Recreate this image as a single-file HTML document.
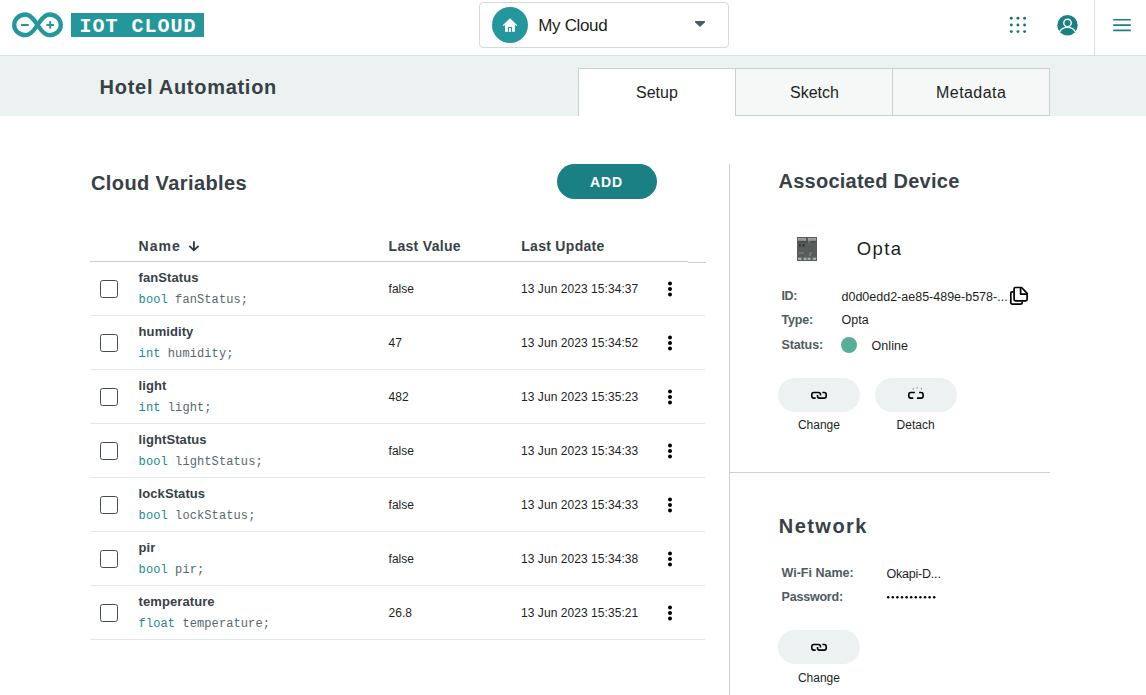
<!DOCTYPE html>
<html><head><meta charset="utf-8"><title>IoT Cloud</title><style>
*{box-sizing:border-box}
html,body{margin:0;padding:0}
body{width:1146px;height:695px;overflow:hidden;background:#fff;position:relative;font-family:'Liberation Sans',sans-serif}
.t{position:absolute;white-space:nowrap;line-height:1}
.a{position:absolute}
</style></head><body>
<div class="a" style="left:0;top:55px;width:1146px;height:1px;background:#dcdfdf"></div>
<svg class="a" style="left:0;top:0" width="80" height="50" viewBox="0 0 80 50">
<g fill="none" stroke="#24979c" stroke-width="4.3">
<path d="M37.5,25 C35,21.5 31.5,14.5 25.6,14.5 C19,14.5 14.2,19.3 14.2,24.9 C14.2,30.5 19,35.2 25.6,35.2 C31.5,35.2 35,28.5 37.5,25 Z"/>
<path d="M37.5,25 C40,21.5 43.5,14.5 49.4,14.5 C56,14.5 60.8,19.3 60.8,24.9 C60.8,30.5 56,35.2 49.4,35.2 C43.5,35.2 40,28.5 37.5,25 Z"/>
</g>
<rect x="21" y="24" width="7.8" height="2" fill="#24979c"/>
<rect x="46.4" y="24" width="7.6" height="2" fill="#24979c"/>
<rect x="49.2" y="21.2" width="2" height="7.4" fill="#24979c"/>
</svg>
<div class="a" style="left:71px;top:13px;width:133px;height:24px;background:#24979c"></div>
<div class="t " style="left:79.5px;top:16.97px;font-size:20px;font-weight:bold;color:#fff;font-family:'Liberation Mono', monospace;letter-spacing:1px">IOT CLOUD</div>

<div class="a" style="left:479px;top:2px;width:250px;height:46px;border:1px solid #d3dadb;border-radius:4px"></div>
<div class="a" style="left:492px;top:7px;width:36px;height:36px;border-radius:50%;background:#24979c"></div>
<svg class="a" style="left:500px;top:15px" width="20" height="20" viewBox="0 0 20 20">
<path d="M10,3.2 L17.3,10.3 L16.5,11.1 L15,9.8 L15,16.8 L5,16.8 L5,9.8 L3.5,11.1 L2.7,10.3 Z" fill="#fff"/>
<rect x="8" y="12" width="4" height="4.8" fill="#24979c"/><rect x="9" y="13" width="2" height="3.8" fill="#fff"/>
</svg>
<div class="t " style="left:538.3px;top:16.55px;font-size:17px;font-weight:normal;color:#1b1f22;font-family:'Liberation Sans', sans-serif;letter-spacing:-0.35px">My Cloud</div>

<svg class="a" style="left:694px;top:20px" width="12" height="8" viewBox="0 0 12 8"><path d="M1,1 L11,1 L11,2.3 L6,7.1 L1,2.3 Z" fill="#4e5b61"/></svg>
<svg class="a" style="left:0;top:0" width="1146" height="56"><circle cx="1011.30" cy="18.30" r="1.45" fill="#0f767a"/><circle cx="1011.30" cy="24.95" r="1.45" fill="#0f767a"/><circle cx="1011.30" cy="31.60" r="1.45" fill="#0f767a"/><circle cx="1017.95" cy="18.30" r="1.45" fill="#0f767a"/><circle cx="1017.95" cy="24.95" r="1.45" fill="#0f767a"/><circle cx="1017.95" cy="31.60" r="1.45" fill="#0f767a"/><circle cx="1024.60" cy="18.30" r="1.45" fill="#0f767a"/><circle cx="1024.60" cy="24.95" r="1.45" fill="#0f767a"/><circle cx="1024.60" cy="31.60" r="1.45" fill="#0f767a"/><circle cx="1067.5" cy="25.3" r="10.2" fill="#1b8083"/><circle cx="1067.5" cy="22.9" r="3.7" fill="none" stroke="#fff" stroke-width="1.4"/><path d="M1059.6,32 C1061,28.8 1064,27.3 1067.5,27.3 C1071,27.3 1074,28.8 1075.4,32" fill="none" stroke="#fff" stroke-width="1.3"/><rect x="1094" y="0" width="1" height="55" fill="#dae1e2"/><rect x="1113" y="18.9" width="18" height="1.7" rx="0.8" fill="#1b8083"/><rect x="1113" y="24.2" width="18" height="1.7" rx="0.8" fill="#1b8083"/><rect x="1113" y="29.6" width="18" height="1.7" rx="0.8" fill="#1b8083"/></svg>
<div class="a" style="left:0;top:56px;width:1146px;height:60px;background:#ecf1f1"></div>
<div class="t " style="left:99.6px;top:77.00px;font-size:20px;font-weight:bold;color:#374146;font-family:'Liberation Sans', sans-serif;letter-spacing:0.72px">Hotel Automation</div>

<div class="a" style="left:578px;top:68px;width:158px;height:48px;background:#fff;border:1px solid #c9d2d3;border-bottom:none"></div>
<div class="a" style="left:735px;top:68px;width:158px;height:48px;background:#f6f8f8;border:1px solid #c9d2d3"></div>
<div class="a" style="left:892px;top:68px;width:158px;height:48px;background:#f6f8f8;border:1px solid #c9d2d3"></div>
<div class="a" style="left:736px;top:115px;width:314px;height:1px;background:#c9d2d3"></div>
<div class="t " style="left:636px;top:84.70px;font-size:16px;font-weight:normal;color:#1b1f22;font-family:'Liberation Sans', sans-serif;">Setup</div>

<div class="t " style="left:790px;top:84.70px;font-size:16px;font-weight:normal;color:#1b1f22;font-family:'Liberation Sans', sans-serif;">Sketch</div>

<div class="t " style="left:936px;top:84.70px;font-size:16px;font-weight:normal;color:#1b1f22;font-family:'Liberation Sans', sans-serif;letter-spacing:0.45px">Metadata</div>

<div class="t " style="left:91px;top:172.50px;font-size:20px;font-weight:bold;color:#374146;font-family:'Liberation Sans', sans-serif;letter-spacing:0.4px">Cloud Variables</div>

<div class="a" style="left:557px;top:164px;width:100px;height:35px;border-radius:18px;background:#1b8083"></div>
<div class="t " style="left:590px;top:175.10px;font-size:14px;font-weight:bold;color:#fff;font-family:'Liberation Sans', sans-serif;letter-spacing:0.85px">ADD</div>

<div class="t " style="left:138.6px;top:239.00px;font-size:14px;font-weight:bold;color:#374146;font-family:'Liberation Sans', sans-serif;letter-spacing:1px">Name</div>

<svg class="a" style="left:186px;top:240px" width="16" height="14" viewBox="0 0 16 14"><path d="M7.9,1.2 V10.2 M3.3,5.8 L7.9,10.3 L12.5,5.8" fill="none" stroke="#2c363b" stroke-width="1.8"/></svg>
<div class="t " style="left:388.6px;top:239.40px;font-size:14px;font-weight:bold;color:#374146;font-family:'Liberation Sans', sans-serif;letter-spacing:0.3px">Last Value</div>

<div class="t " style="left:521.2px;top:239.40px;font-size:14px;font-weight:bold;color:#374146;font-family:'Liberation Sans', sans-serif;letter-spacing:0.3px">Last Update</div>

<div class="a" style="left:90px;top:261px;width:598px;height:1px;background:#c5cfd0"></div>
<div class="a" style="left:688px;top:262px;width:18px;height:1px;background:#c5cfd0"></div>
<div class="a" style="left:100px;top:280px;width:18px;height:18px;border:1.6px solid #434e53;border-radius:2.6px"></div>
<div class="t " style="left:138.6px;top:270.75px;font-size:13px;font-weight:bold;color:#374146;font-family:'Liberation Sans', sans-serif;letter-spacing:0.08px">fanStatus</div>

<div class="t " style="left:138.6px;top:293.50px;font-size:12px;font-weight:normal;color:#5a676c;font-family:'Liberation Mono', monospace;letter-spacing:0.1px"><span style="color:#23898d">bool</span> fanStatus;</div>

<div class="t " style="left:388.6px;top:282.80px;font-size:12px;font-weight:normal;color:#1b1f22;font-family:'Liberation Sans', sans-serif;">false</div>

<div class="t " style="left:521px;top:282.60px;font-size:12px;font-weight:normal;color:#1b1f22;font-family:'Liberation Sans', sans-serif;letter-spacing:0.06px">13 Jun 2023 15:34:37</div>

<svg class="a" style="left:666px;top:280px" width="8" height="18" viewBox="0 0 8 18"><circle cx="4" cy="3.5" r="2" fill="#000"/><circle cx="4" cy="9" r="2" fill="#000"/><circle cx="4" cy="14.6" r="2" fill="#000"/></svg>
<div class="a" style="left:90px;top:315px;width:615px;height:1px;background:#e3e8e9"></div>
<div class="a" style="left:100px;top:334px;width:18px;height:18px;border:1.6px solid #434e53;border-radius:2.6px"></div>
<div class="t " style="left:138.6px;top:324.75px;font-size:13px;font-weight:bold;color:#374146;font-family:'Liberation Sans', sans-serif;letter-spacing:0.08px">humidity</div>

<div class="t " style="left:138.6px;top:347.50px;font-size:12px;font-weight:normal;color:#5a676c;font-family:'Liberation Mono', monospace;letter-spacing:0.1px"><span style="color:#23898d">int</span> humidity;</div>

<div class="t " style="left:388.6px;top:336.80px;font-size:12px;font-weight:normal;color:#1b1f22;font-family:'Liberation Sans', sans-serif;">47</div>

<div class="t " style="left:521px;top:336.60px;font-size:12px;font-weight:normal;color:#1b1f22;font-family:'Liberation Sans', sans-serif;letter-spacing:0.06px">13 Jun 2023 15:34:52</div>

<svg class="a" style="left:666px;top:334px" width="8" height="18" viewBox="0 0 8 18"><circle cx="4" cy="3.5" r="2" fill="#000"/><circle cx="4" cy="9" r="2" fill="#000"/><circle cx="4" cy="14.6" r="2" fill="#000"/></svg>
<div class="a" style="left:90px;top:369px;width:615px;height:1px;background:#e3e8e9"></div>
<div class="a" style="left:100px;top:388px;width:18px;height:18px;border:1.6px solid #434e53;border-radius:2.6px"></div>
<div class="t " style="left:138.6px;top:378.75px;font-size:13px;font-weight:bold;color:#374146;font-family:'Liberation Sans', sans-serif;letter-spacing:0.08px">light</div>

<div class="t " style="left:138.6px;top:401.50px;font-size:12px;font-weight:normal;color:#5a676c;font-family:'Liberation Mono', monospace;letter-spacing:0.1px"><span style="color:#23898d">int</span> light;</div>

<div class="t " style="left:388.6px;top:390.80px;font-size:12px;font-weight:normal;color:#1b1f22;font-family:'Liberation Sans', sans-serif;">482</div>

<div class="t " style="left:521px;top:390.60px;font-size:12px;font-weight:normal;color:#1b1f22;font-family:'Liberation Sans', sans-serif;letter-spacing:0.06px">13 Jun 2023 15:35:23</div>

<svg class="a" style="left:666px;top:388px" width="8" height="18" viewBox="0 0 8 18"><circle cx="4" cy="3.5" r="2" fill="#000"/><circle cx="4" cy="9" r="2" fill="#000"/><circle cx="4" cy="14.6" r="2" fill="#000"/></svg>
<div class="a" style="left:90px;top:423px;width:615px;height:1px;background:#e3e8e9"></div>
<div class="a" style="left:100px;top:442px;width:18px;height:18px;border:1.6px solid #434e53;border-radius:2.6px"></div>
<div class="t " style="left:138.6px;top:432.75px;font-size:13px;font-weight:bold;color:#374146;font-family:'Liberation Sans', sans-serif;letter-spacing:0.08px">lightStatus</div>

<div class="t " style="left:138.6px;top:455.50px;font-size:12px;font-weight:normal;color:#5a676c;font-family:'Liberation Mono', monospace;letter-spacing:0.1px"><span style="color:#23898d">bool</span> lightStatus;</div>

<div class="t " style="left:388.6px;top:444.80px;font-size:12px;font-weight:normal;color:#1b1f22;font-family:'Liberation Sans', sans-serif;">false</div>

<div class="t " style="left:521px;top:444.60px;font-size:12px;font-weight:normal;color:#1b1f22;font-family:'Liberation Sans', sans-serif;letter-spacing:0.06px">13 Jun 2023 15:34:33</div>

<svg class="a" style="left:666px;top:442px" width="8" height="18" viewBox="0 0 8 18"><circle cx="4" cy="3.5" r="2" fill="#000"/><circle cx="4" cy="9" r="2" fill="#000"/><circle cx="4" cy="14.6" r="2" fill="#000"/></svg>
<div class="a" style="left:90px;top:477px;width:615px;height:1px;background:#e3e8e9"></div>
<div class="a" style="left:100px;top:496px;width:18px;height:18px;border:1.6px solid #434e53;border-radius:2.6px"></div>
<div class="t " style="left:138.6px;top:486.75px;font-size:13px;font-weight:bold;color:#374146;font-family:'Liberation Sans', sans-serif;letter-spacing:0.08px">lockStatus</div>

<div class="t " style="left:138.6px;top:509.50px;font-size:12px;font-weight:normal;color:#5a676c;font-family:'Liberation Mono', monospace;letter-spacing:0.1px"><span style="color:#23898d">bool</span> lockStatus;</div>

<div class="t " style="left:388.6px;top:498.80px;font-size:12px;font-weight:normal;color:#1b1f22;font-family:'Liberation Sans', sans-serif;">false</div>

<div class="t " style="left:521px;top:498.60px;font-size:12px;font-weight:normal;color:#1b1f22;font-family:'Liberation Sans', sans-serif;letter-spacing:0.06px">13 Jun 2023 15:34:33</div>

<svg class="a" style="left:666px;top:496px" width="8" height="18" viewBox="0 0 8 18"><circle cx="4" cy="3.5" r="2" fill="#000"/><circle cx="4" cy="9" r="2" fill="#000"/><circle cx="4" cy="14.6" r="2" fill="#000"/></svg>
<div class="a" style="left:90px;top:531px;width:615px;height:1px;background:#e3e8e9"></div>
<div class="a" style="left:100px;top:550px;width:18px;height:18px;border:1.6px solid #434e53;border-radius:2.6px"></div>
<div class="t " style="left:138.6px;top:540.75px;font-size:13px;font-weight:bold;color:#374146;font-family:'Liberation Sans', sans-serif;letter-spacing:0.08px">pir</div>

<div class="t " style="left:138.6px;top:563.50px;font-size:12px;font-weight:normal;color:#5a676c;font-family:'Liberation Mono', monospace;letter-spacing:0.1px"><span style="color:#23898d">bool</span> pir;</div>

<div class="t " style="left:388.6px;top:552.80px;font-size:12px;font-weight:normal;color:#1b1f22;font-family:'Liberation Sans', sans-serif;">false</div>

<div class="t " style="left:521px;top:552.60px;font-size:12px;font-weight:normal;color:#1b1f22;font-family:'Liberation Sans', sans-serif;letter-spacing:0.06px">13 Jun 2023 15:34:38</div>

<svg class="a" style="left:666px;top:550px" width="8" height="18" viewBox="0 0 8 18"><circle cx="4" cy="3.5" r="2" fill="#000"/><circle cx="4" cy="9" r="2" fill="#000"/><circle cx="4" cy="14.6" r="2" fill="#000"/></svg>
<div class="a" style="left:90px;top:585px;width:615px;height:1px;background:#e3e8e9"></div>
<div class="a" style="left:100px;top:604px;width:18px;height:18px;border:1.6px solid #434e53;border-radius:2.6px"></div>
<div class="t " style="left:138.6px;top:594.75px;font-size:13px;font-weight:bold;color:#374146;font-family:'Liberation Sans', sans-serif;letter-spacing:0.08px">temperature</div>

<div class="t " style="left:138.6px;top:617.50px;font-size:12px;font-weight:normal;color:#5a676c;font-family:'Liberation Mono', monospace;letter-spacing:0.1px"><span style="color:#23898d">float</span> temperature;</div>

<div class="t " style="left:388.6px;top:606.80px;font-size:12px;font-weight:normal;color:#1b1f22;font-family:'Liberation Sans', sans-serif;">26.8</div>

<div class="t " style="left:521px;top:606.60px;font-size:12px;font-weight:normal;color:#1b1f22;font-family:'Liberation Sans', sans-serif;letter-spacing:0.06px">13 Jun 2023 15:35:21</div>

<svg class="a" style="left:666px;top:604px" width="8" height="18" viewBox="0 0 8 18"><circle cx="4" cy="3.5" r="2" fill="#000"/><circle cx="4" cy="9" r="2" fill="#000"/><circle cx="4" cy="14.6" r="2" fill="#000"/></svg>
<div class="a" style="left:90px;top:639px;width:615px;height:1px;background:#e3e8e9"></div>
<div class="a" style="left:729px;top:164px;width:1px;height:531px;background:#c9d2d3"></div>
<div class="t " style="left:778.5px;top:170.60px;font-size:20px;font-weight:bold;color:#374146;font-family:'Liberation Sans', sans-serif;letter-spacing:0.25px">Associated Device</div>

<svg class="a" style="left:797px;top:237px" width="20" height="24" viewBox="0 0 20 24">
<rect x="0" y="0" width="20" height="24" fill="#585c5b"/>
<rect x="1" y="1" width="8" height="2.6" fill="#a9aca6"/><rect x="11" y="1" width="8" height="2.6" fill="#a9aca6"/>
<rect x="1.5" y="1.6" width="7" height="1.2" fill="#8f938e"/><rect x="11.5" y="1.6" width="7" height="1.2" fill="#8f938e"/>
<rect x="1" y="20.6" width="3.6" height="2.4" fill="#a9aca6"/><rect x="6.6" y="20.6" width="3" height="2.4" fill="#a9aca6"/><rect x="10.6" y="20.6" width="3" height="2.4" fill="#a9aca6"/><rect x="15.6" y="20.6" width="3.4" height="2.4" fill="#a9aca6"/>
<rect x="1" y="4.2" width="18" height="1.6" fill="#4a4e4d"/>
<rect x="2" y="7" width="1.6" height="2.6" fill="#2a2d2d"/><rect x="5.8" y="7" width="1.6" height="2.6" fill="#2a2d2d"/>
<rect x="11" y="4.4" width="2.4" height="1.2" fill="#7a8a9a"/>
<rect x="2" y="15.6" width="5" height="0.9" fill="#8a8e8e"/><rect x="12" y="15.6" width="3" height="0.9" fill="#8a8e8e"/>
<rect x="12.5" y="17.2" width="1" height="2" fill="#9a9e9e"/>
</svg>
<div class="t " style="left:856.7px;top:239.58px;font-size:18.5px;font-weight:normal;color:#1b1f22;font-family:'Liberation Sans', sans-serif;letter-spacing:1.4px">Opta</div>

<div class="t " style="left:781.4px;top:290.27px;font-size:12.5px;font-weight:bold;color:#4e5b61;font-family:'Liberation Sans', sans-serif;letter-spacing:-0.3px">ID:</div>

<div class="t " style="left:781.4px;top:314.18px;font-size:12.5px;font-weight:bold;color:#4e5b61;font-family:'Liberation Sans', sans-serif;letter-spacing:-0.15px">Type:</div>

<div class="t " style="left:781.4px;top:339.07px;font-size:12.5px;font-weight:bold;color:#4e5b61;font-family:'Liberation Sans', sans-serif;letter-spacing:-0.1px">Status:</div>

<div class="t " style="left:841.5px;top:290.98px;font-size:12.5px;font-weight:normal;color:#1b1f22;font-family:'Liberation Sans', sans-serif;">d0d0edd2-ae85-489e-b578-...</div>

<svg class="a" style="left:0;top:0" width="1146" height="695"><g fill="none" stroke="#000" stroke-width="1.7" stroke-linejoin="round">
<path d="M1013.6,291.8 H1012.1 Q1010.8,291.8 1010.8,293.1 V302.8 Q1010.8,304.1 1012.1,304.1 H1020.9 Q1022.2,304.1 1022.2,302.8 V301.4"/>
<path d="M1015.4,287.5 H1021.6 L1027.1,293.3 V299.5 Q1027.1,300.8 1025.8,300.8 H1015.4 Q1014.1,300.8 1014.1,299.5 V288.8 Q1014.1,287.5 1015.4,287.5 Z"/>
<path d="M1020.6,287.8 V294.1 H1026.8"/></g></svg>
<div class="t " style="left:841.5px;top:314.18px;font-size:12.5px;font-weight:normal;color:#1b1f22;font-family:'Liberation Sans', sans-serif;">Opta</div>

<div class="a" style="left:841px;top:337px;width:16px;height:16px;border-radius:50%;background:#58ad98"></div>
<div class="t " style="left:871.4px;top:339.68px;font-size:12.5px;font-weight:normal;color:#1b1f22;font-family:'Liberation Sans', sans-serif;letter-spacing:0.1px">Online</div>

<div class="a" style="left:778px;top:378px;width:82px;height:34px;border-radius:17px;background:#ecf1f1"></div>
<svg class="a" style="left:0;top:0" width="1146" height="695"><g transform="translate(0,0)" fill="none" stroke="#000" stroke-width="1.6"><path d="M815.6,398.1 H813.9 Q811.8,398.1 811.8,396 V394.6 Q811.8,392.5 813.9,392.5 H818.4 Q820.5,392.5 820.5,394.6 V395.6"/><path d="M822.4,392.5 H824.1 Q826.2,392.5 826.2,394.6 V396 Q826.2,398.1 824.1,398.1 H819.6 Q817.5,398.1 817.5,396 V395"/></g></svg>
<div class="a" style="left:875px;top:378px;width:82px;height:34px;border-radius:17px;background:#ecf1f1"></div>
<svg class="a" style="left:0;top:0" width="1146" height="695"><g fill="none" stroke="#000" stroke-width="1.6"><path d="M913.2,398.1 H910.9 Q908.8,398.1 908.8,396 V394.6 Q908.8,392.5 910.9,392.5 H914.9"/><path d="M919.1,392.5 H921 Q923.1,392.5 923.1,394.6 V396 Q923.1,398.1 921,398.1 H917"/></g><circle cx="913.2" cy="388.9" r="0.6" fill="#666"/><circle cx="917.1" cy="387.8" r="0.6" fill="#666"/><circle cx="921.4" cy="388.7" r="0.6" fill="#666"/></svg>
<div class="t " style="left:797.9px;top:419.10px;font-size:12px;font-weight:normal;color:#1b1f22;font-family:'Liberation Sans', sans-serif;">Change</div>

<div class="t " style="left:896.5px;top:419.10px;font-size:12px;font-weight:normal;color:#1b1f22;font-family:'Liberation Sans', sans-serif;letter-spacing:0.05px">Detach</div>

<div class="a" style="left:730px;top:472px;width:320px;height:1px;background:#c9d2d3"></div>
<div class="t " style="left:778.8px;top:516.00px;font-size:20px;font-weight:bold;color:#374146;font-family:'Liberation Sans', sans-serif;letter-spacing:1.45px">Network</div>

<div class="t " style="left:781.5px;top:567.17px;font-size:12.5px;font-weight:bold;color:#4e5b61;font-family:'Liberation Sans', sans-serif;">Wi-Fi Name:</div>

<div class="t " style="left:781.5px;top:591.27px;font-size:12.5px;font-weight:bold;color:#4e5b61;font-family:'Liberation Sans', sans-serif;letter-spacing:-0.2px">Password:</div>

<div class="t " style="left:886.4px;top:568.38px;font-size:12.5px;font-weight:normal;color:#1b1f22;font-family:'Liberation Sans', sans-serif;letter-spacing:-0.2px">Okapi-D...</div>

<svg class="a" style="left:0;top:0" width="1146" height="695"><circle cx="888.20" cy="597.2" r="1.25" fill="#000"/><circle cx="892.80" cy="597.2" r="1.25" fill="#000"/><circle cx="897.40" cy="597.2" r="1.25" fill="#000"/><circle cx="902.00" cy="597.2" r="1.25" fill="#000"/><circle cx="906.60" cy="597.2" r="1.25" fill="#000"/><circle cx="911.20" cy="597.2" r="1.25" fill="#000"/><circle cx="915.80" cy="597.2" r="1.25" fill="#000"/><circle cx="920.40" cy="597.2" r="1.25" fill="#000"/><circle cx="925.00" cy="597.2" r="1.25" fill="#000"/><circle cx="929.60" cy="597.2" r="1.25" fill="#000"/><circle cx="934.20" cy="597.2" r="1.25" fill="#000"/></svg>
<div class="a" style="left:778px;top:630px;width:82px;height:34px;border-radius:17px;background:#ecf1f1"></div>
<svg class="a" style="left:0;top:0" width="1146" height="695"><g transform="translate(0,252)" fill="none" stroke="#000" stroke-width="1.6"><path d="M815.6,398.1 H813.9 Q811.8,398.1 811.8,396 V394.6 Q811.8,392.5 813.9,392.5 H818.4 Q820.5,392.5 820.5,394.6 V395.6"/><path d="M822.4,392.5 H824.1 Q826.2,392.5 826.2,394.6 V396 Q826.2,398.1 824.1,398.1 H819.6 Q817.5,398.1 817.5,396 V395"/></g></svg>
<div class="t " style="left:797.9px;top:671.80px;font-size:12px;font-weight:normal;color:#1b1f22;font-family:'Liberation Sans', sans-serif;">Change</div>

</body></html>
